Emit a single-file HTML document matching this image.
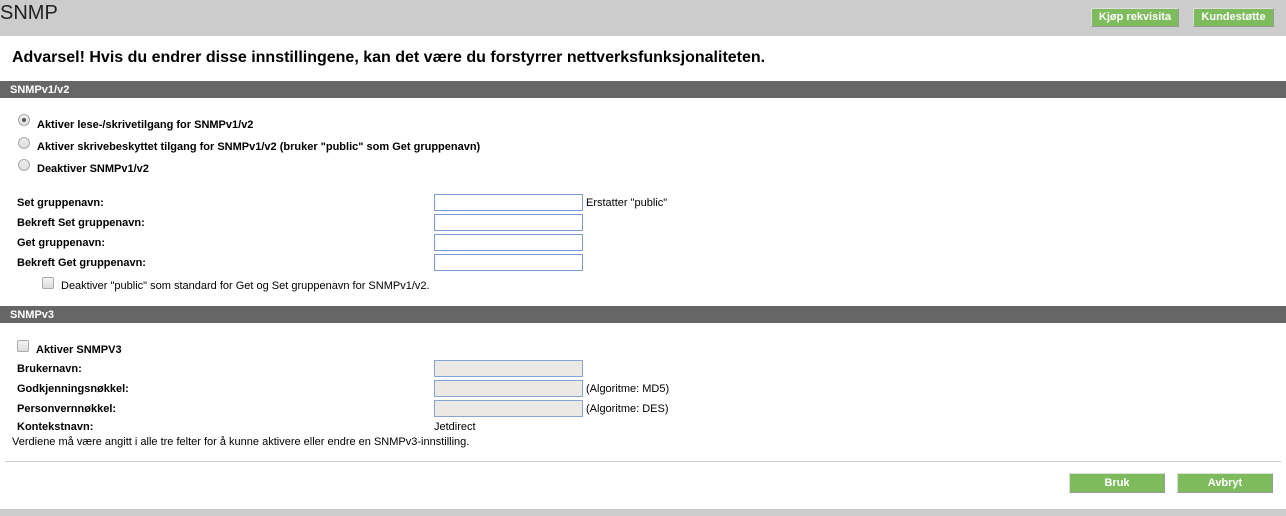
<!DOCTYPE html>
<html><head><meta charset="utf-8"><style>
*{margin:0;padding:0;box-sizing:border-box}
body{width:1286px;height:516px;position:relative;background:#fff;font-family:"Liberation Sans",Arial,sans-serif;color:#000;overflow:hidden}
.a{position:absolute;white-space:nowrap}
.b{font-weight:bold;font-size:11px}
.n{font-size:11px}
.bar{position:absolute;left:0;width:1286px;height:17px;background:#666;color:#fff;font-weight:bold;font-size:11px;padding:3px 0 0 10px}
.inp{position:absolute;left:434px;width:149px;height:17px;border:1px solid #7a9cd3;background:#fff}
.dis{background:#ebe9e4;border-color:#86a4d6}
.btn{position:absolute;background:#7dbb5c;border:1px solid #999;border-top-color:#ddd;border-left-color:#ddd;color:#fff;font-weight:bold;font-size:11px;text-align:center}
.rad{position:absolute;left:18px;width:12px;height:12px;border-radius:50%;border:1px solid #aaa;background:linear-gradient(#eee,#ddd)}
.chk{position:absolute;width:12px;height:12px;border-radius:2px;border:1px solid #aaa;background:linear-gradient(#f4f4f4,#ddd)}
</style></head><body>
<div class="a" style="left:0;top:0;width:1286px;height:36px;background:#ccc"></div>
<div class="a" style="left:0;top:2px;font-size:20px;color:#222">SNMP</div>
<div class="btn" style="left:1091px;top:8px;width:88px;height:19px;line-height:17px">Kjøp rekvisita</div>
<div class="btn" style="left:1193px;top:8px;width:81px;height:19px;line-height:17px">Kundestøtte</div>
<div class="a" style="left:12px;top:49px;font-size:16px;font-weight:bold">Advarsel! Hvis du endrer disse innstillingene, kan det være du forstyrrer nettverksfunksjonaliteten.</div>
<div class="bar" style="top:81px">SNMPv1/v2</div>
<div class="rad" style="top:114px"><div style="position:absolute;left:3px;top:3px;width:4px;height:4px;border-radius:50%;background:#555"></div></div>
<div class="rad" style="top:137px"></div>
<div class="rad" style="top:159px"></div>
<div class="a b" style="left:37px;top:119px">Aktiver lese-/skrivetilgang for SNMPv1/v2</div>
<div class="a b" style="left:37px;top:141px">Aktiver skrivebeskyttet tilgang for SNMPv1/v2 (bruker "public" som Get gruppenavn)</div>
<div class="a b" style="left:37px;top:163px">Deaktiver SNMPv1/v2</div>
<div class="a b" style="left:17px;top:197px">Set gruppenavn:</div>
<div class="a b" style="left:17px;top:217px">Bekreft Set gruppenavn:</div>
<div class="a b" style="left:17px;top:237px">Get gruppenavn:</div>
<div class="a b" style="left:17px;top:257px">Bekreft Get gruppenavn:</div>
<div class="inp" style="top:194px"></div>
<div class="inp" style="top:214px"></div>
<div class="inp" style="top:234px"></div>
<div class="inp" style="top:254px"></div>
<div class="a n" style="left:586px;top:197px">Erstatter "public"</div>
<div class="chk" style="left:42px;top:277px"></div>
<div class="a n" style="left:61px;top:280px">Deaktiver "public" som standard for Get og Set gruppenavn for SNMPv1/v2.</div>
<div class="bar" style="top:306px">SNMPv3</div>
<div class="chk" style="left:17px;top:340px"></div>
<div class="a b" style="left:36px;top:344px">Aktiver SNMPV3</div>
<div class="a b" style="left:17px;top:363px">Brukernavn:</div>
<div class="a b" style="left:17px;top:383px">Godkjenningsnøkkel:</div>
<div class="a b" style="left:17px;top:403px">Personvernnøkkel:</div>
<div class="a b" style="left:17px;top:421px">Kontekstnavn:</div>
<div class="inp dis" style="top:360px"></div>
<div class="inp dis" style="top:380px"></div>
<div class="inp dis" style="top:400px"></div>
<div class="a n" style="left:586px;top:383px">(Algoritme: MD5)</div>
<div class="a n" style="left:586px;top:403px">(Algoritme: DES)</div>
<div class="a n" style="left:434px;top:421px">Jetdirect</div>
<div class="a n" style="left:12px;top:436px">Verdiene må være angitt i alle tre felter for å kunne aktivere eller endre en SNMPv3-innstilling.</div>
<div class="a" style="left:5px;top:461px;width:1276px;height:1px;background:#ccc"></div>
<div class="btn" style="left:1069px;top:473px;width:96px;height:20px;line-height:18px">Bruk</div>
<div class="btn" style="left:1177px;top:473px;width:96px;height:20px;line-height:18px">Avbryt</div>
<div class="a" style="left:0;top:509px;width:1286px;height:7px;background:#ccc"></div>
</body></html>
